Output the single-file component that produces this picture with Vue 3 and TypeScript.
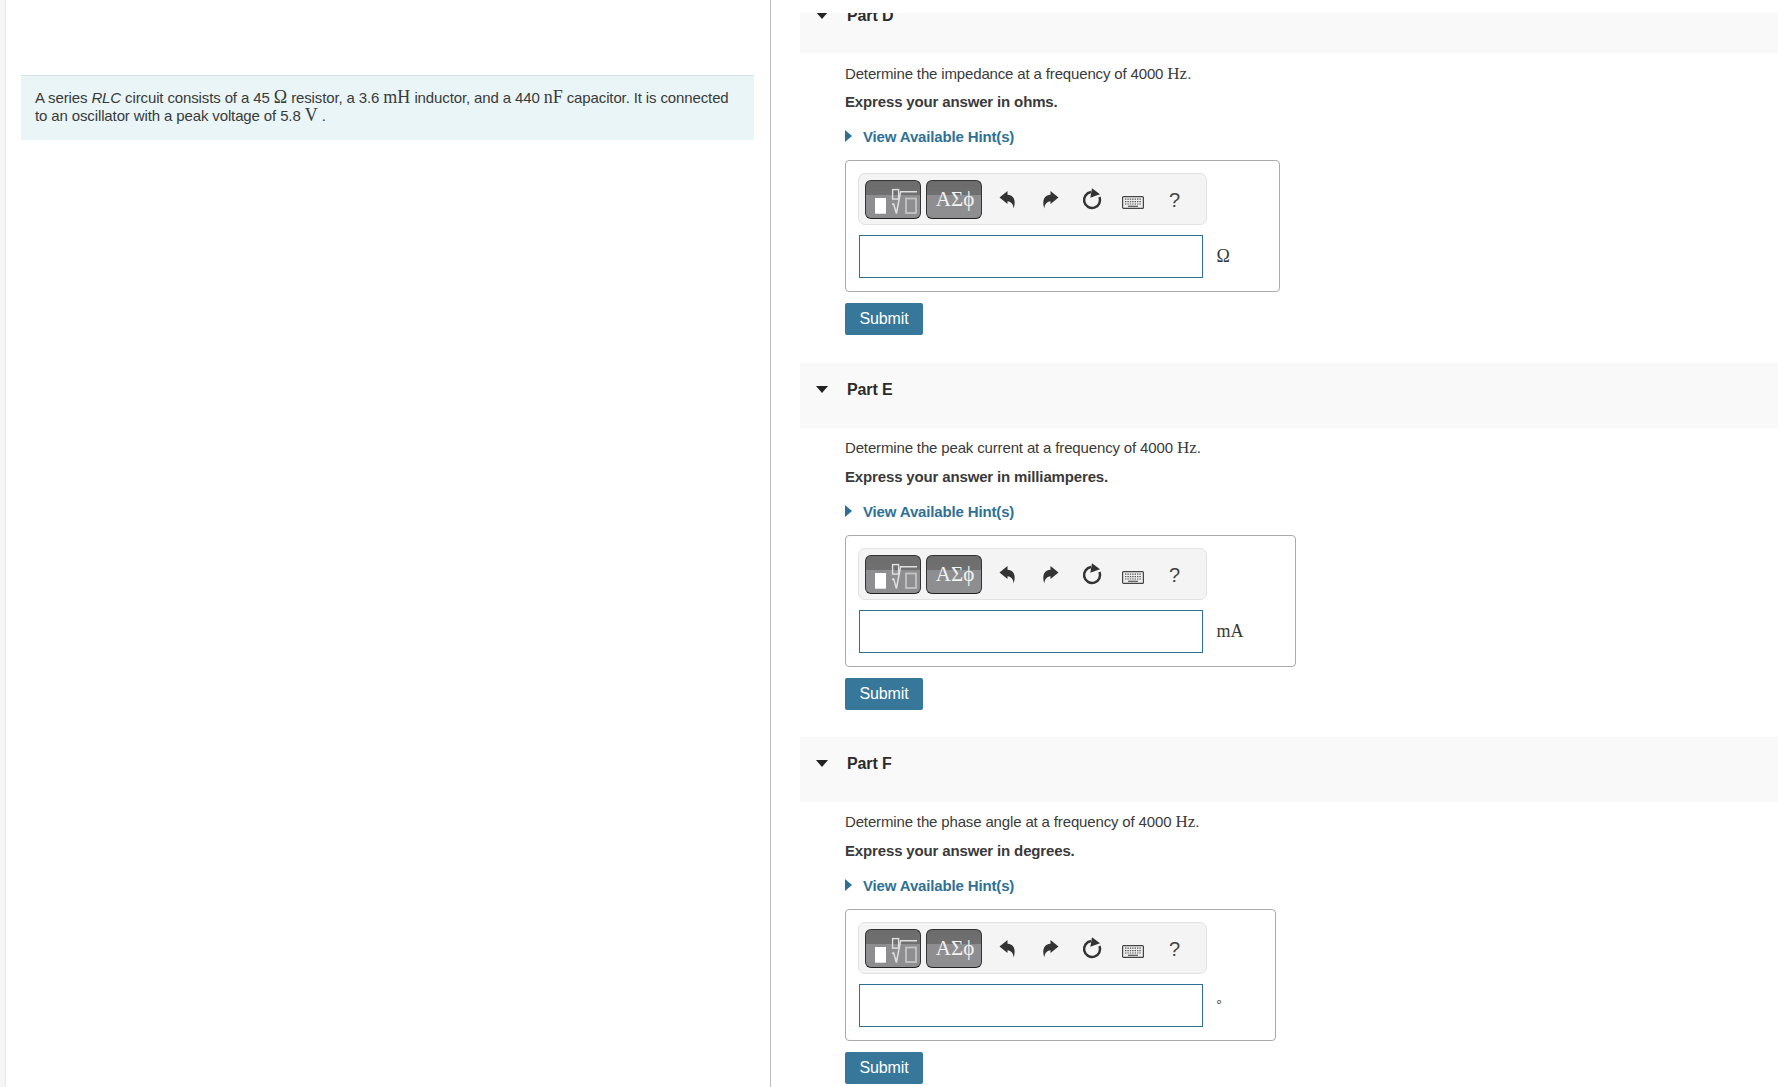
<script setup lang="ts">
interface Part {
  name: string
  question: string
  unitLabel: string
  express: string
  unit: string
  unitClass: string
}
const parts: Part[] = [
  { name: 'Part D', question: 'Determine the impedance at a frequency of 4000', unitLabel: 'Hz', express: 'Express your answer in ohms.', unit: 'Ω', unitClass: 'u-d' },
  { name: 'Part E', question: 'Determine the peak current at a frequency of 4000', unitLabel: 'Hz', express: 'Express your answer in milliamperes.', unit: 'mA', unitClass: 'u-e' },
  { name: 'Part F', question: 'Determine the phase angle at a frequency of 4000', unitLabel: 'Hz', express: 'Express your answer in degrees.', unit: '∘', unitClass: 'u-f' },
]
</script>

<template>
  <div class="page">
    <aside class="left">
      <div class="intro">
        A series <em>RLC</em> circuit consists of a 45 <span class="m">Ω</span> resistor, a 3.6 <span class="m">mH</span> inductor, and a 440 <span class="m">nF</span> capacitor. It is connected to an oscillator with a peak voltage of 5.8 <span class="m">V</span> .
      </div>
    </aside>
    <main class="right">
      <div class="top-cover"></div>
      <div class="scroll">
        <section v-for="p in parts" :key="p.name" class="part">
          <header class="band">
            <span class="caret"></span>
            <span class="part-name">{{ p.name }}</span>
          </header>
          <div class="body">
            <p class="q">{{ p.question }} <span class="m hz">{{ p.unitLabel }}</span>.</p>
            <p class="ex">{{ p.express }}</p>
            <p class="hint"><span class="hint-caret"></span>View Available Hint(s)</p>
            <div class="answer" :class="p.unitClass">
              <div class="toolbar">
                <button class="tbtn t1" type="button">
                  <svg width="56" height="39" viewBox="0 0 56 39">
                    <rect x="10" y="18" width="11" height="15.700" fill="#fff" />
                    <rect x="27.600" y="9.600" width="6" height="9.500" fill="none" stroke="#e0e0e0" stroke-width="1.400" />
                    <path d="M27 24.500l1.600 -.6 2.800 9.600 4.200 -21.800h16.400" fill="none" stroke="#e0e0e0" stroke-width="1.500" />
                    <rect x="41" y="18.500" width="10" height="14.500" fill="none" stroke="#c4c4c4" stroke-width="1.800" />
                  </svg>
                </button>
                <button class="tbtn t2" type="button">ΑΣϕ</button>
                <svg class="ic undo" width="18" height="20" viewBox="0 0 18 20">
                  <path d="M.5 7.500 8.500 1v3.800c5.500.3 9 4.700 6.200 13.700C14.300 14.500 12.500 11.500 8.500 11.200V14z" fill="#333" />
                </svg>
                <svg class="ic redo" width="18" height="20" viewBox="0 0 18 20">
                  <path d="M17.500 7.500 9.500 1v3.800c-5.500.3-9 4.700-6.200 13.700C3.700 14.500 5.500 11.500 9.500 11.200V14z" fill="#333" />
                </svg>
                <svg class="ic reset" width="24" height="26" viewBox="0 0 24 26">
                  <path d="M19.500 10A8 8 0 1 1 11 5.060" fill="none" stroke="#333" stroke-width="2.500" />
                  <path d="M12 1.300 20 7.300 10.300 10.700z" fill="#333" />
                </svg>
                <svg class="ic kbd" width="22" height="13" viewBox="0 0 22 13">
                  <rect x="0.600" y="0.600" width="20.800" height="11.800" rx="1" fill="#eee" stroke="#444" stroke-width="1.200" />
                  <path d="M3 3.200h16M3 5.600h16M3 8h16" stroke="#555" stroke-width="1.200" stroke-dasharray="1.400 1" />
                  <path d="M6 10.300h10" stroke="#555" stroke-width="1.200" />
                </svg>
                <span class="help">?</span>
              </div>
              <div class="entry">
                <div class="field"></div>
                <span class="unit m">{{ p.unit }}</span>
              </div>
            </div>
            <button class="submit" type="button">Submit</button>
          </div>
        </section>
      </div>
    </main>
  </div>
</template>

<style>
html, body { margin: 0; background: #fff; }
</style>

<style scoped>
.page {
  display: flex;
  height: 1087px;
  width: 1778px;
  overflow: hidden;
  font-family: "Liberation Sans", Arial, sans-serif;
  font-size: 15px;
  letter-spacing: -0.15px;
  color: #3a3a3a;
  background: #fff;
}
.left {
  flex: none;
  width: 733px;
  margin-left: 5px;
  border-left: 1px solid #e9e9e9;
  border-right: 1px solid #bbb;
  padding: 75px 16px 0 15px;
  background: #fff;
  box-shadow: -5px 0 0 #f5f5f5;
}
.intro {
  background: #e9f5f7;
  border-top: 1px solid #d5e2e6;
  padding: 13px 14px 17px 14px;
  line-height: 18px;
  height: 34px;
  letter-spacing: -0.125px;
}
.m { font-family: "Liberation Serif", "DejaVu Serif", serif; font-size: 18px; line-height: 0; letter-spacing: 0; }
.hz { font-size: 17px; }
.right { flex: 1; position: relative; overflow: hidden; }
.top-cover { position: absolute; left: 0; right: 0; top: 0; height: 13px; background: #fff; z-index: 2; }
.scroll { margin-top: -11px; padding-left: 29px; }
.part { height: 374px; }
.band {
  height: 65px;
  background: #f9f9f9;
  display: flex;
  align-items: flex-start;
  padding-top: 17px;
  padding-left: 16px;
  box-sizing: border-box;
}
.part:first-child .band { height: 64px; }
.part:first-child .body { padding-top: 1px; }
.caret {
  width: 0; height: 0;
  border-left: 6px solid transparent;
  border-right: 6px solid transparent;
  border-top: 7px solid #222;
  margin-top: 6px;
  margin-right: 19px;
}
.part-name { font-weight: 700; font-size: 16px; line-height: 20px; color: #2b2b2b; letter-spacing: -0.1px; }
.body { padding-left: 45px; }
.q { margin: 0; padding-top: 9px; line-height: 22px; }
.ex { margin: 7px 0 0; font-weight: 700; line-height: 22px; }
.part:first-child .ex { margin-top: 6px; }
.hint { margin: 14px 0 0; font-weight: 700; color: #2f7196; line-height: 20px; display: flex; align-items: center; }
.hint-caret {
  width: 0; height: 0;
  border-top: 6px solid transparent;
  border-bottom: 6px solid transparent;
  border-left: 7px solid #2f6f94;
  margin-right: 11px;
  margin-top: -3px;
}
.answer {
  margin-top: 13px;
  display: inline-block;
  vertical-align: top;
  border: 1px solid #aaa;
  border-radius: 4px;
  padding: 12px 13px 13px 12px;
  height: 132px;
  box-sizing: border-box;
}
.u-d { width: 435px; }
.u-e { width: 451px; }
.u-f { width: 431px; }
.toolbar {
  width: 349px;
  height: 52px;
  box-sizing: border-box;
  background: #f4f4f4;
  border: 1px solid #e2e2e2;
  border-radius: 7px;
  display: flex;
  align-items: center;
  padding-left: 6px;
  position: relative;
  letter-spacing: 0;
}
.tbtn {
  width: 56px;
  height: 39px;
  padding: 0;
  border: 1px solid #333;
  border-bottom-color: #222;
  border-radius: 6px;
  background: linear-gradient(#6c6c6c 0, #707070 38%, #8e8e90 38%, #8e8e90 100%);
  box-sizing: border-box;
  overflow: hidden;
}
.t1 svg { display: block; margin: -1px; }
.t2 {
  margin-left: 5px;
  padding-left: 2px;
  color: #f2f2f2;
  font-family: "Liberation Serif", serif;
  font-size: 21px;
  line-height: 36px;
  text-align: center;
}
.ic { flex: none; }
.undo { margin-left: 17px; margin-top: 2px; }
.redo { margin-left: 24px; margin-top: 2px; }
.reset { margin-left: 21px; margin-top: 2px; }
.kbd { margin-left: 18px; margin-top: 7px; }
.help { margin-left: 25px; font-size: 20px; color: #444; margin-top: 3px; }
.entry { display: flex; align-items: flex-start; margin-top: 10px; }
.field {
  width: 344px;
  height: 43px;
  box-sizing: border-box;
  border: 1px solid #2f7196;
  margin-left: 1px;
  background: #fff;
}
.unit { margin-left: 13.500px; font-size: 18px; line-height: 42px; color: #3a3a3a; }
.u-f .unit { font-family: "DejaVu Sans", sans-serif; font-size: 13px; line-height: 36px; margin-left: 12px; color: #555; }
.submit {
  display: block;
  margin-top: 11px;
  width: 78px;
  height: 32px;
  background: #37779a;
  color: #fff;
  border: 0;
  border-radius: 2px;
  font-family: "Liberation Sans", Arial, sans-serif;
  font-size: 16px;
  letter-spacing: -0.1px;
  padding: 0;
}
</style>
